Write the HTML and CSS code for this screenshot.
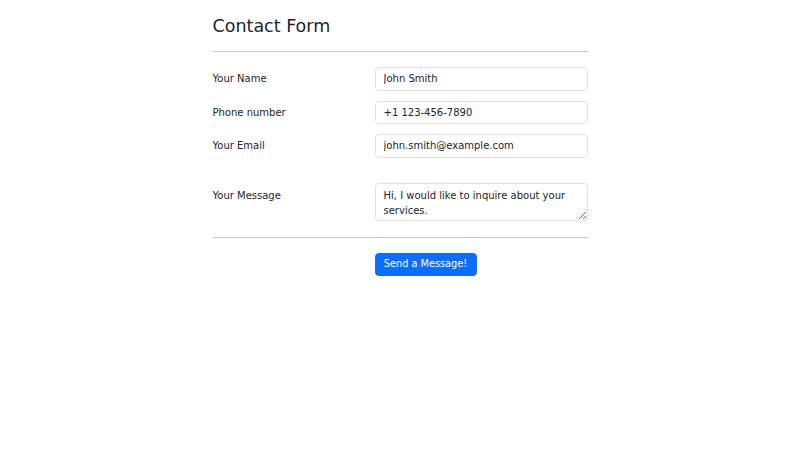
FILE: index.html
```html
<!DOCTYPE html>
<html lang="en">
<head>
<meta charset="utf-8">
<title>Contact Form</title>
<link rel="stylesheet" href="styles.css">
</head>
<body>
<main class="page">
  <h3 class="title">Contact Form</h3>
  <hr class="rule rule-top">
  <form class="form">
    <div class="field">
      <label class="label" for="name">Your Name</label>
      <input class="control" id="name" type="text" value="John Smith">
    </div>
    <div class="field">
      <label class="label" for="phone">Phone number</label>
      <input class="control" id="phone" type="text" value="+1 123-456-7890">
    </div>
    <div class="field field-last">
      <label class="label" for="email">Your Email</label>
      <input class="control" id="email" type="text" value="john.smith@example.com">
    </div>
    <div class="field field-message">
      <label class="label" for="message">Your Message</label>
      <textarea class="control control-area" id="message">Hi, I would like to inquire about your services.</textarea>
    </div>
    <hr class="rule rule-bottom">
    <div class="field">
      <span></span>
      <div><button class="btn" type="button">Send a Message!</button></div>
    </div>
  </form>
</main>
</body>
</html>
```
FILE: styles.css
```css
html, body {
  margin: 0;
  padding: 0;
  background: #fff;
}
body {
  font-family: "DejaVu Sans", sans-serif;
  font-size: 10px;
  line-height: 15px;
  color: #212529;
}
.page {
  width: 375px;
  margin: 0 auto;
  padding-top: 16px;
}
.title {
  margin: 0;
  font-size: 17.5px;
  line-height: 21px;
  font-weight: 400;
}
.rule {
  border: 0;
  border-top: 1px solid #212529;
  opacity: 0.25;
  height: 0;
}
.rule-top {
  margin: 14px 0 15px;
}
.rule-bottom {
  margin: 15.7px 0 14.6px;
}
.form {
  margin: 0;
}
.field {
  display: grid;
  grid-template-columns: 162.5px 1fr;
  margin-bottom: 10px;
}
.field-last {
  margin-bottom: 25.8px;
}
.field-message {
  margin-bottom: 0;
}
.label {
  padding-top: 4.3px;
  line-height: 15px;
}
.control {
  box-sizing: border-box;
  width: 100%;
  height: 23.5px;
  margin: 0;
  padding: 3.75px 7.5px;
  font-family: "DejaVu Sans", sans-serif;
  font-size: 10px;
  line-height: 15px;
  color: #212529;
  background: #fff;
  border: 1px solid #dee2e6;
  border-radius: 3.75px;
  outline: none;
}
.control-area {
  display: block;
  height: 38px;
  resize: vertical;
  overflow: hidden;
}
.btn {
  box-sizing: border-box;
  height: 23.5px;
  margin: 0;
  padding: 3px 8.4px 3px 7.8px;
  font-family: "DejaVu Sans", sans-serif;
  font-size: 9.75px;
  line-height: 14.5px;
  color: #fff;
  background: #0d6efd;
  border: 1px solid #0d6efd;
  border-radius: 3.75px;
  cursor: pointer;
}
```
